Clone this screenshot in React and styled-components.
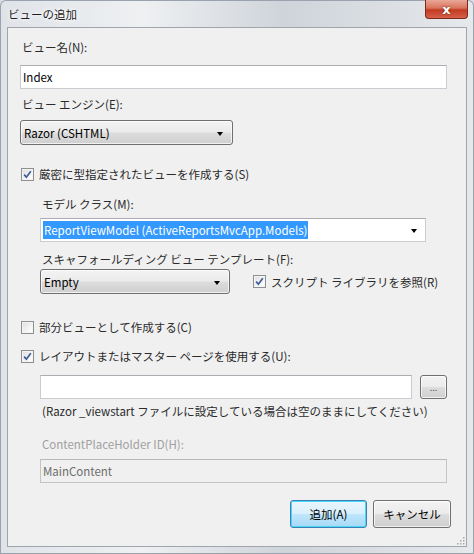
import React from "react";
import styled, { createGlobalStyle } from "styled-components";

const GlobalStyle = createGlobalStyle`
  html, body { margin: 0; padding: 0; background: #d9dde3; }
  body { font-family: "Noto Sans CJK JP", "Noto Sans", sans-serif; }
`;

const Frame = styled.div`
  width: 474px;
  height: 554px;
  box-sizing: border-box;
  padding: 0 7px 7px 7px;
  display: flex;
  flex-direction: column;
  background: linear-gradient(90deg, #dfe3e8 0%, #eef0f2 30%, #cfd4da 60%, #e6e9ec 100%);
  border-radius: 6px 6px 0 0;
  box-shadow: inset 0 0 0 1px #9aa3ad;
`;

const TitleBar = styled.div`
  height: 27px;
  display: flex;
  align-items: flex-start;
  justify-content: space-between;
`;

const Title = styled.div`
  font-size: 11.5px;
  line-height: 14px;
  color: #1e1e1e;
  padding: 7px 0 0 1px;
  text-shadow: 0 0 6px #fff, 0 0 3px #fff;
`;

const CloseButton = styled.div`
  width: 43px;
  height: 19px;
  margin-right: -1px;
  box-sizing: border-box;
  border: 1px solid #7b2a1c;
  border-top: none;
  border-radius: 0 0 4px 4px;
  background: linear-gradient(180deg, #e9a898 0%, #d9735c 45%, #c23b22 55%, #d6604a 100%);
  display: flex;
  align-items: center;
  justify-content: center;
  color: #fff;
  font-family: "DejaVu Sans", sans-serif;
  font-weight: 700;
  font-size: 13px;
  line-height: 1;
  text-shadow: 0 0 2px #5a1a10;
`;

const Client = styled.div`
  flex: 1;
  position: relative;
  box-sizing: border-box;
  border: 1px solid #9ea5ad;
  background: #f0f0f0;
  padding: 0 12px 0 12px;
  display: flex;
  flex-direction: column;
  font-size: 11.5px;
`;

const Label = styled.div`
  line-height: 18px;
  height: 18px;
  color: ${(p) => (p.disabled ? "#a0a0a0" : "#2a2a2a")};
  margin-top: ${(p) => p.mt || 0}px;
  padding-left: ${(p) => (p.indent ? 22 : 2)}px;
  white-space: nowrap;
`;

const TextBox = styled.div`
  box-sizing: border-box;
  height: ${(p) => p.h || 24}px;
  flex: ${(p) => (p.grow ? 1 : "none")};
  margin: ${(p) => `${p.mt || 0}px ${p.mr || 0}px 0 ${p.ml || 0}px`};
  border: 1px solid ${(p) => (p.disabled ? "#c4c4c4" : "#c9ccd1")};
  border-top-color: ${(p) => (p.disabled ? "#b8b8b8" : "#abadb3")};
  background: ${(p) => (p.disabled ? "#f0f0f0" : "#fff")};
  color: ${(p) => (p.disabled ? "#6d6d6d" : "#000")};
  padding-left: 2px;
  display: flex;
  align-items: center;
  justify-content: space-between;
`;

const Selected = styled.span`
  background: #3399ff;
  color: #fff;
  line-height: 18px;
  padding: 0 1px;
`;

const Arrow = styled.span`
  width: 0;
  height: 0;
  border-left: 3.5px solid transparent;
  border-right: 3.5px solid transparent;
  border-top: 4px solid #000;
  margin-right: ${(p) => p.mr || 9}px;
  margin-top: 2px;
`;

const DropDown = styled.div`
  box-sizing: border-box;
  width: ${(p) => p.w}px;
  height: 25px;
  margin-top: ${(p) => p.mt || 0}px;
  border: 1px solid #707070;
  border-radius: 3px;
  background: linear-gradient(180deg, #f3f3f3 0%, #ebebeb 48%, #dddddd 52%, #cfcfcf 100%);
  box-shadow: inset 0 0 0 1px rgba(255, 255, 255, 0.7);
  color: #000;
  padding-left: 3px;
  display: flex;
  align-items: center;
  justify-content: space-between;
`;

const CheckRow = styled.div`
  display: flex;
  align-items: center;
  gap: 5px;
  height: 18px;
  margin-top: ${(p) => p.mt || 0}px;
  margin-left: ${(p) => p.ml || 1}px;
  color: #2a2a2a;
  white-space: nowrap;
`;

const Box = styled.span`
  width: 13px;
  height: 13px;
  box-sizing: border-box;
  border: 1px solid #8e8f8f;
  background: linear-gradient(135deg, #dcdcdc 0%, #f4f4f4 60%, #fff 100%);
  box-shadow: inset 0 0 0 1px #f4f4f4;
  display: flex;
  align-items: center;
  justify-content: center;
`;

const Row = styled.div`
  display: flex;
  align-items: center;
  margin: ${(p) => `${p.mt || 0}px ${p.mr || 0}px 0 ${p.ml || 0}px`};
`;

const SmallButton = styled.div`
  box-sizing: border-box;
  width: 27px;
  height: 24px;
  margin-left: 8px;
  border: 1px solid #707070;
  border-radius: 3px;
  background: linear-gradient(180deg, #f3f3f3 0%, #ebebeb 48%, #dddddd 52%, #cfcfcf 100%);
  box-shadow: inset 0 0 0 1px rgba(255, 255, 255, 0.7);
  font-size: 9px;
  color: #555;
  display: flex;
  align-items: center;
  justify-content: center;
`;

const Buttons = styled.div`
  display: flex;
  justify-content: flex-end;
  gap: 6px;
  margin-top: ${(p) => p.mt || 0}px;
  margin-right: 3px;
`;

const Button = styled.div`
  box-sizing: border-box;
  width: ${(p) => p.w}px;
  height: 28px;
  border: 1px solid ${(p) => (p.primary ? "#3c7fb1" : "#707070")};
  border-radius: 3px;
  background: ${(p) =>
    p.primary
      ? "linear-gradient(180deg, #eaf6fd 0%, #d9f0fc 48%, #bee6fd 52%, #a7d9f5 100%)"
      : "linear-gradient(180deg, #f3f3f3 0%, #ebebeb 48%, #dddddd 52%, #cfcfcf 100%)"};
  box-shadow: inset 0 0 0 1px ${(p) => (p.primary ? "#48d8fb" : "rgba(255,255,255,0.7)")};
  color: #000;
  display: flex;
  align-items: center;
  justify-content: center;
`;

const Grip = styled.svg`
  position: absolute;
  right: 1px;
  bottom: 1px;
`;

const Check = () => (
  <svg width="9" height="9" viewBox="0 0 9 9">
    <path d="M1.2 4.6 L3.4 7.2 L7.8 1.2" fill="none" stroke="#3d5a99" strokeWidth="1.7" />
  </svg>
);

const CheckBox = ({ checked, children, ...rest }) => (
  <CheckRow {...rest}>
    <Box>{checked && <Check />}</Box>
    <span>{children}</span>
  </CheckRow>
);

const App = () => (
  <>
    <GlobalStyle />
    <Frame>
      <TitleBar>
        <Title>ビューの追加</Title>
        <CloseButton>x</CloseButton>
      </TitleBar>
      <Client>
        <Label mt={10}>ビュー名(N):</Label>
        <TextBox mt={9} mr={7}>Index</TextBox>
        <Label mt={6}>ビュー エンジン(E):</Label>
        <DropDown w={213} mt={7}>
          Razor (CSHTML)
          <Arrow />
        </DropDown>

        <CheckBox checked mt={20}>厳密に型指定されたビューを作成する(S)</CheckBox>
        <Label indent mt={12}>モデル クラス(M):</Label>
        <TextBox mt={5} ml={20} mr={28}>
          <Selected>ReportViewModel (ActiveReportsMvcApp.Models)</Selected>
          <Arrow mr={8} />
        </TextBox>
        <Label indent mt={8}>スキャフォールディング ビュー テンプレート(F):</Label>
        <Row mt={1} ml={20}>
          <DropDown w={190}>
            Empty
            <Arrow />
          </DropDown>
          <CheckBox checked ml={23}>スクリプト ライブラリを参照(R)</CheckBox>
        </Row>

        <CheckBox mt={24}>部分ビューとして作成する(C)</CheckBox>
        <CheckBox checked mt={11}>レイアウトまたはマスター ページを使用する(U):</CheckBox>
        <Row mt={10} ml={20} mr={7}>
          <TextBox grow h={24} />
          <SmallButton>...</SmallButton>
        </Row>
        <Label indent mt={3}>(Razor _viewstart ファイルに設定している場合は空のままにしてください)</Label>
        <Label indent disabled mt={15}>ContentPlaceHolder ID(H):</Label>
        <TextBox disabled mt={6} ml={20} mr={7} h={24}>
          MainContent
        </TextBox>
        <Buttons mt={17}>
          <Button primary w={77}>追加(A)</Button>
          <Button w={78}>キャンセル</Button>
        </Buttons>
        <Grip width="10" height="10" viewBox="0 0 10 10">
          {[
            [8, 2], [8, 5], [5, 5], [8, 8], [5, 8], [2, 8],
          ].map(([x, y]) => (
            <rect key={`${x}-${y}`} x={x} y={y} width="1.5" height="1.5" fill="#a8a8a8" />
          ))}
        </Grip>
      </Client>
    </Frame>
  </>
);

export default App;
